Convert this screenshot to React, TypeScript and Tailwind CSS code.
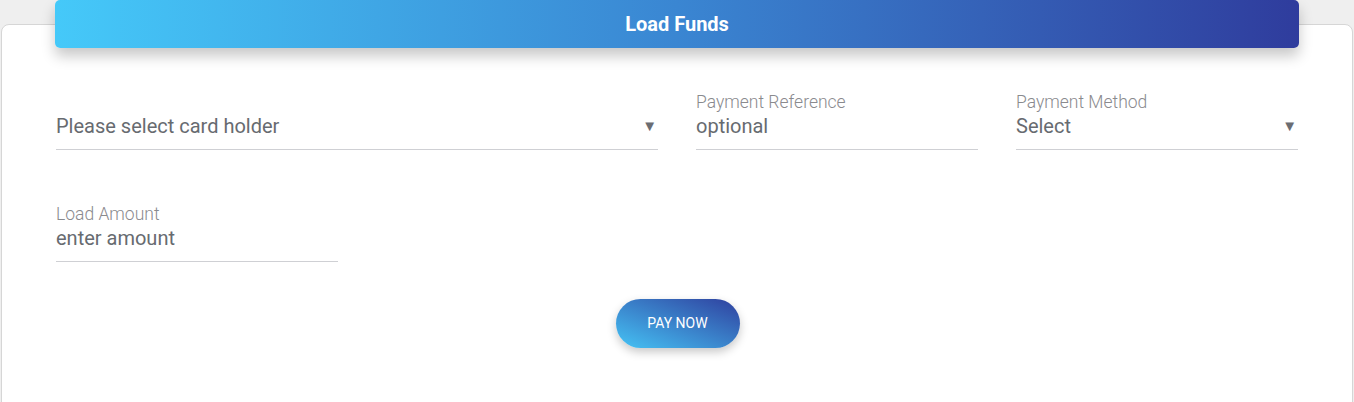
const FONT = "font-['Roboto','Liberation_Sans',sans-serif]";

function Field({
  label,
  value,
  select,
}: {
  label?: string;
  value: string;
  select?: boolean;
}) {
  return (
    <div className="flex flex-col justify-end border-b border-[#cfd0d4] pb-[9px]">
      {label ? (
        <span className="text-[17.5px] leading-5 font-light text-[#8a8a8e]">{label}</span>
      ) : null}
      <div className="flex items-center justify-between">
        <span className="text-[20px] leading-7 text-[#676b70]">{value}</span>
        {select ? <span className="pr-[1px] text-[15px] leading-none text-[#6a6d72]">▼</span> : null}
      </div>
    </div>
  );
}

export default function App() {
  return (
    <div className={`${FONT} h-[402px] w-[1354px] overflow-hidden bg-[#efefef] pt-[24px] pl-[1px]`}>
      <div className="h-[400px] w-[1352px] rounded-lg border border-[#d6d6d6] bg-white">
        <div className="-mt-[25px] ml-[53px] mr-[53px] flex h-[48px] items-center justify-center rounded-[5px] bg-linear-to-r from-[#45c9f9] via-[#3a86d2] to-[#2f3c9d] shadow-[0_8px_14px_rgba(0,0,0,0.22)]">
          <h1 className="text-[20px] font-bold text-white">Load Funds</h1>
        </div>

        <div className="pl-[54px] pt-[44px]">
          <div className="grid grid-cols-[602px_282px_282px] gap-x-[38px]">
            <Field value="Please select card holder" select />
            <Field label="Payment Reference" value="optional" />
            <Field label="Payment Method" value="Select" select />
          </div>
          <div className="mt-[54px] w-[282px]">
            <Field label="Load Amount" value="enter amount" />
          </div>
        </div>

        <div className="mt-[37px] flex justify-center">
          <button className="ml-[1px] h-[49px] w-[124px] rounded-full bg-linear-to-tr from-[#45c4f5] to-[#2f3f9e] text-[14px] font-normal text-white shadow-[0_4px_10px_rgba(0,0,0,0.22)]">
            PAY NOW
          </button>
        </div>
      </div>
    </div>
  );
}
